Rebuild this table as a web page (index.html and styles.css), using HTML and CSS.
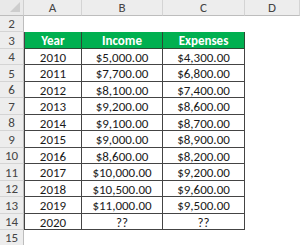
FILE: index.html
```html
<!DOCTYPE html>
<html>
<head>
<meta charset="utf-8">
<link rel="stylesheet" href="styles.css">
</head>
<body>
<div class="sheet">
  <div class="corner"><span class="tri"></span></div>
  <div class="colhead">A</div>
  <div class="colhead">B</div>
  <div class="colhead">C</div>
  <div class="colhead">D</div>

  <div class="rowhead">2</div>
  <div class="empty"></div><div class="empty"></div><div class="empty"></div><div class="empty"></div>

  <div class="rowhead">3</div>
  <div class="hd first">Year</div><div class="hd">Income</div><div class="hd">Expenses</div><div class="empty"></div>

  <div class="rowhead">4</div>
  <div class="td first">2010</div><div class="td">$5,000.00</div><div class="td">$4,300.00</div><div class="empty"></div>

  <div class="rowhead">5</div>
  <div class="td first">2011</div><div class="td">$7,700.00</div><div class="td">$6,800.00</div><div class="empty"></div>

  <div class="rowhead">6</div>
  <div class="td first">2012</div><div class="td">$8,100.00</div><div class="td">$7,400.00</div><div class="empty"></div>

  <div class="rowhead">7</div>
  <div class="td first">2013</div><div class="td">$9,200.00</div><div class="td">$8,600.00</div><div class="empty"></div>

  <div class="rowhead">8</div>
  <div class="td first">2014</div><div class="td">$9,100.00</div><div class="td">$8,700.00</div><div class="empty"></div>

  <div class="rowhead">9</div>
  <div class="td first">2015</div><div class="td">$9,000.00</div><div class="td">$8,900.00</div><div class="empty"></div>

  <div class="rowhead">10</div>
  <div class="td first">2016</div><div class="td">$8,600.00</div><div class="td">$8,200.00</div><div class="empty"></div>

  <div class="rowhead">11</div>
  <div class="td first">2017</div><div class="td">$10,000.00</div><div class="td">$9,200.00</div><div class="empty"></div>

  <div class="rowhead">12</div>
  <div class="td first">2018</div><div class="td">$10,500.00</div><div class="td">$9,600.00</div><div class="empty"></div>

  <div class="rowhead">13</div>
  <div class="td first">2019</div><div class="td">$11,000.00</div><div class="td">$9,500.00</div><div class="empty"></div>

  <div class="rowhead">14</div>
  <div class="td first">2020</div><div class="td">??</div><div class="td">??</div><div class="empty"></div>

  <div class="rowhead">15</div>
  <div class="empty"></div><div class="empty"></div><div class="empty"></div><div class="empty"></div>
</div>
</body>
</html>
```
FILE: styles.css
```css
html, body {
  margin: 0;
  padding: 0;
  background: #ffffff;
}

.sheet {
  display: grid;
  grid-template-columns: 24px 58px 81px 82px 55px;
  grid-template-rows: 16px 16px 17px 16px 17px 16px 17px 16px 17px 16px 17px 16px 17px 16px 16px;
  width: 300px;
  height: 245px;
  overflow: hidden;
  font-family: Carlito, "Liberation Sans Narrow", "DejaVu Sans Condensed", sans-serif;
  font-size: 13px;
  color: #111;
}

.sheet > div {
  box-sizing: border-box;
  display: flex;
  align-items: center;
  justify-content: center;
  line-height: 1;
}

.corner {
  background: #e9e9e9;
  border-right: 1px solid #cfcfcf;
  border-bottom: 1px solid #bdbdbd;
  position: relative;
}

.tri {
  position: absolute;
  right: 3px;
  bottom: 3px;
  width: 0;
  height: 0;
  border-left: 10px solid transparent;
  border-bottom: 10px solid #cdcdcd;
}

.colhead {
  background: #ededed;
  color: #444;
  border-right: 1px solid #d4d4d4;
  border-bottom: 1px solid #bdbdbd;
}

.rowhead {
  background: #ededed;
  color: #444;
  border-right: 1px solid #bdbdbd;
  border-bottom: 1px solid #d4d4d4;
}

.empty {
  background: #ffffff;
}

.hd {
  background: #00b050;
  color: #ffffff;
  font-weight: bold;
  border-right: 1px solid #2c4a34;
  border-bottom: 1px solid #2c4a34;
}

.td {
  background: #ffffff;
  color: #1a1a1a;
  border-right: 1px solid #444;
  border-bottom: 1px solid #444;
  padding-top: 1px;
}

.first {
  border-left: 1px solid #444;
}
```
